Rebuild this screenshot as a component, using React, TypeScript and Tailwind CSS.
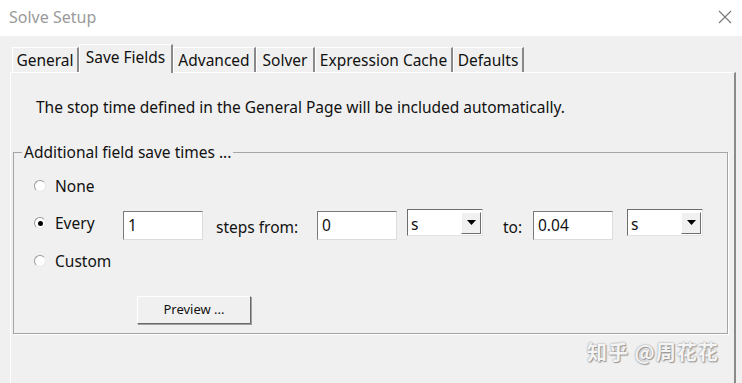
import React from "react";

const font = { fontFamily: '"Noto Sans", "Open Sans", "Noto Sans CJK SC", sans-serif' };

function Radio({ checked, label }: { checked?: boolean; label: string }) {
  return (
    <div className="flex items-center h-[20px]">
      <div className="w-[12px] h-[12px] rounded-full border border-[#9a9a9a] border-r-[#e8e8e8] border-b-[#e8e8e8] bg-white flex items-center justify-center">
        {checked && <div className="w-[5px] h-[5px] rounded-full bg-black" />}
      </div>
      <span className="ml-[9px] text-[15.5px] text-[#111] leading-[20px]">{label}</span>
    </div>
  );
}

function TextBox({ value, w }: { value: string; w: string }) {
  return (
    <div
      className={`${w} h-[29px] mt-[2px] bg-white border border-[#7a7a7a] border-r-[#dcdcdc] border-b-[#dcdcdc] pl-[4px] flex items-center text-[15.5px] text-[#111]`}
    >
      {value}
    </div>
  );
}

function Combo({ ml }: { ml: string }) {
  return (
    <div className={`${ml} w-[76px] h-[27px] bg-white border border-[#6e6e6e] border-r-[#e3e3e3] border-b-[#e3e3e3] flex items-center justify-between pl-[3px] pr-[1px]`}>
      <span className="text-[15.5px] text-[#111] leading-[20px] mt-[2px]">s</span>
      <div className="w-[20px] h-[22px] bg-[#f0f0f0] border border-white border-r-[#6e6e6e] border-b-[#6e6e6e] flex items-center justify-center">
        <svg width="9" height="5" viewBox="0 0 9 5">
          <polygon points="0,0 9,0 4.5,5" fill="#000" />
        </svg>
      </div>
    </div>
  );
}

export default function App() {
  const tabs = [
    { label: "General", w: "w-[67px]" },
    { label: "Save Fields", w: "w-[94px]", sel: true },
    { label: "Advanced", w: "w-[83px]" },
    { label: "Solver", w: "w-[59px]" },
    { label: "Expression Cache", w: "w-[138px]" },
    { label: "Defaults", w: "w-[71px]" },
  ];
  return (
    <div className="w-[742px] h-[383px] bg-[#f0f0f0] flex flex-col overflow-hidden relative" style={font}>
      <div className="h-[36px] bg-white flex items-center justify-between pl-[9px] pr-[10px] shrink-0">
        <span className="text-[16px] text-[#9a9a9a] leading-[20px] -mt-[2px]">Solve Setup</span>
        <svg width="14" height="14" viewBox="0 0 14 14" className="-mt-[3px]">
          <path d="M1 1 L13 13 M13 1 L1 13" stroke="#777" strokeWidth="1.1" />
        </svg>
      </div>
      <div className="flex-1 flex flex-col pl-[10px] pr-[6px] pt-[8px]">
        <div className="flex items-end h-[28px] pl-[2px]">
          {tabs.map((t) =>
            t.sel ? (
              <div
                key={t.label}
                className={`${t.w} h-[29px] -mb-[1px] relative z-10 bg-[#f0f0f0] border-l border-t border-white border-r-2 border-r-[#8a8a8a] flex items-center justify-center text-[15.5px] text-[#111] pb-[2px]`}
              >
                {t.label}
              </div>
            ) : (
              <div
                key={t.label}
                className={`${t.w} h-[25px] bg-[#f0f0f0] border-l border-t border-white border-r-2 border-r-[#8a8a8a] flex items-center justify-center text-[15.5px] text-[#111] pt-[2px]`}
              >
                {t.label}
              </div>
            )
          )}
        </div>
        <div className="flex-1 border-l border-t border-white border-r-2 border-r-[#8a8a8a] pl-[2px] pr-[6px] pt-[24px]">
          <div className="pl-[23px] text-[15.5px] text-[#111] leading-[20px]">
            The stop time defined in the General Page will be included automatically.
          </div>
          <div className="mt-[35px] relative border border-[#a5a5a5] shadow-[1px_1px_0_#ffffff] pb-[9px]">
            <span className="absolute -top-[11px] left-[8px] px-[2px] bg-[#f0f0f0] text-[15.5px] text-[#111] leading-[20px]">
              Additional field save times ...
            </span>
            <div className="pl-[20px] pt-[23px]">
              <Radio label="None" />
              <div className="flex items-start mt-[13px] h-[31px]">
                <div className="w-[89px] mt-[4px]">
                  <Radio checked label="Every" />
                </div>
                <TextBox value="1" w="w-[80px]" />
                <span className="ml-[13px] w-[101px] mt-[8px] text-[15.5px] text-[#111] leading-[20px]">steps from:</span>
                <TextBox value="0" w="w-[80px]" />
                <Combo ml="ml-[10px]" />
                <span className="ml-[20px] w-[30px] mt-[8px] text-[15.5px] text-[#111] leading-[20px]">to:</span>
                <TextBox value="0.04" w="w-[80px]" />
                <Combo ml="ml-[14px]" />
              </div>
              <div className="mt-[11px]">
                <Radio label="Custom" />
              </div>
              <div className="mt-[25px] ml-[103px] w-[114px] h-[28px] bg-[#f0f0f0] border border-white border-r-[#6a6a6a] border-b-[#6a6a6a] shadow-[1px_1px_0_#a0a0a0] flex items-center justify-center text-[13px] text-[#111]">
                Preview ...
              </div>
            </div>
          </div>
        </div>
      </div>
      <div
        className="absolute left-[587px] top-[339px] text-[20px] leading-[26px] text-[#f4f4f4] font-bold tracking-[1px] [text-shadow:0_0_2px_#8a8a8a,1px_1px_1px_#9a9a9a]"
        style={{ fontFamily: '"Noto Sans CJK SC", sans-serif' }}
      >
        知乎 @周花花
      </div>
    </div>
  );
}
